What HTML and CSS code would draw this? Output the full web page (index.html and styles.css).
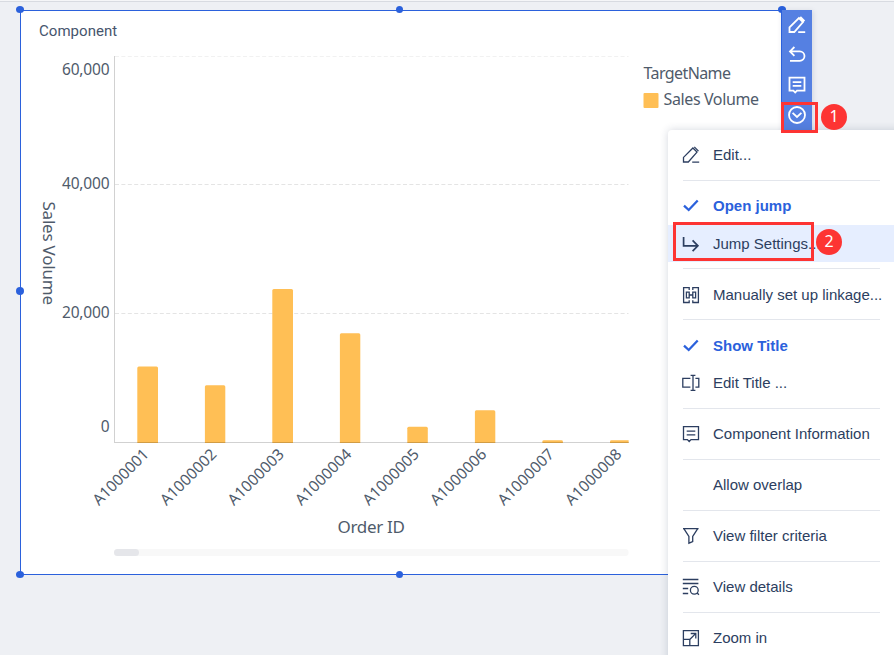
FILE: index.html
```html
<!DOCTYPE html>
<html lang="en">
<head>
<meta charset="utf-8">
<title>Dashboard component menu</title>
<link rel="stylesheet" href="styles.css">
</head>
<body>
<svg class="sprite" aria-hidden="true">
  <symbol id="i-pencil" viewBox="0 0 18 18"><path d="M1.5 16v-4.6L10.9 2l4.1 4.1L6.3 16zM12.3 .9l4.2 4.2M10.2 16.2h7"/></symbol>
  <symbol id="i-undo" viewBox="0 0 18 18"><path d="M6.4 1 2 5.4l4.4 4.4M2 5.4h9.8a4.7 4.7 0 0 1 0 9.4H2"/></symbol>
  <symbol id="i-note" viewBox="0 0 18 18"><path d="M1.5 1.6h15v13H9l-1.8 1.9-1.8-1.9H1.5zM4.7 6.2h8.6M4.7 9.8h8.6"/></symbol>
  <symbol id="i-down" viewBox="0 0 18 18"><circle cx="9" cy="9" r="8"/><path d="m4.6 6.8 4.4 4.2 4.4-4.2"/></symbol>
  <symbol id="i-check" viewBox="0 0 18 18"><path d="m2 8.6 4.7 4.4L15.7 3.5"/></symbol>
  <symbol id="i-jump" viewBox="0 0 18 18"><path d="M1.6 2v8.8h14M10.6 5.4l5.3 5.4-5.3 5.4"/></symbol>
  <symbol id="i-link" viewBox="0 0 18 18"><path d="M7.2 4V1.7H1.6v14.8h5.6v-2.3M10.8 4V1.7h5.6v14.8h-5.6v-2.3M4.4 6.2h2.8v5.6H4.4zM10.8 6.2h2.8v5.6h-2.8zM7.2 9h3.6"/></symbol>
  <symbol id="i-rename" viewBox="0 0 18 18"><path d="M8.4 4.3H.8v8.9h7.6M13.4 4.3h3.4v8.9h-3.4M11 1.3v15M8.6 1.3h4.8M8.6 16.3h4.8"/></symbol>
  <symbol id="i-filter" viewBox="0 0 18 18"><path d="M1 1.6h15.6M2 1.8l4.9 7.6v6.8l3.8-1.6V9.4l4.9-7.6"/></symbol>
  <symbol id="i-details" viewBox="0 0 18 18"><path d="M.8 1.5h15.6M.8 5.5h15.6M.8 10.5h5.4M.8 15.5h5.4M14.9 14.8l2 2"/><circle cx="12.3" cy="12.2" r="3.9"/></symbol>
  <symbol id="i-zoom" viewBox="0 0 18 18"><path d="M1.4 1.6h15v15h-15zM1.4 10.4h6.4v6.2M8 10.2l5.6-5.6M8.7 4.5h5.1v5.1"/></symbol>
</svg>
<div class="canvas">
  <section class="component">
    <h1 class="component-title">Component</h1>
    <svg class="chart" width="760" height="526" viewBox="21 48 760 526">
      <g class="grid">
        <path d="M115 56.5h513.5" class="faint"/>
        <path d="M115 184.5h513.5"/>
        <path d="M115 313.5h513.5"/>
      </g>
      <g class="bars">
        <path d="M137.3 443v-75q0-1.5 1.5-1.5h17.7q1.5 0 1.5 1.5v75z"/>
        <path d="M204.9 443v-56.3q0-1.5 1.5-1.5h17.4q1.5 0 1.5 1.5V443z"/>
        <path d="M272.3 443V290.5q0-1.5 1.5-1.5h17.7q1.5 0 1.5 1.5V443z"/>
        <path d="M339.9 443V334.7q0-1.5 1.5-1.5h17.4q1.5 0 1.5 1.5V443z"/>
        <path d="M407.3 443v-14.7q0-1.5 1.5-1.5h17.5q1.5 0 1.5 1.5V443z"/>
        <path d="M474.9 443v-31.3q0-1.5 1.5-1.5h17.4q1.5 0 1.5 1.5V443z"/>
        <path d="M542.4 443v-1.5q0-1.2 1.5-1.2h17.5q1.5 0 1.5 1.2v1.5z"/>
        <path d="M610 443v-1.5q0-1.2 1.5-1.2h17.1v2.7z"/>
      </g>
      <path class="axis" d="M114.5 56v387M115 442.5h514"/>
      <g class="labels" text-anchor="end">
        <text x="109.5" y="75" textLength="47.5">60,000</text>
        <text x="109.5" y="189" textLength="47.5">40,000</text>
        <text x="109.5" y="318" textLength="47.5">20,000</text>
        <text x="109.5" y="432">0</text>
        <text transform="translate(149.8 455.3) rotate(-45)" textLength="72">A1000001</text>
        <text transform="translate(217.5 455.3) rotate(-45)" textLength="72">A1000002</text>
        <text transform="translate(285 455.3) rotate(-45)" textLength="72">A1000003</text>
        <text transform="translate(352.5 455.3) rotate(-45)" textLength="72">A1000004</text>
        <text transform="translate(420 455.3) rotate(-45)" textLength="72">A1000005</text>
        <text transform="translate(487.5 455.3) rotate(-45)" textLength="72">A1000006</text>
        <text transform="translate(555 455.3) rotate(-45)" textLength="72">A1000007</text>
        <text transform="translate(622.5 455.3) rotate(-45)" textLength="72">A1000008</text>
      </g>
      <g class="names">
        <text transform="translate(42.5 201.5) rotate(90)" textLength="103.5">Sales Volume</text>
        <text x="337.5" y="533" textLength="67.5">Order ID</text>
        <text class="legend" x="643.5" y="79" textLength="87.5">TargetName</text>
        <text class="legend" x="663.5" y="105" textLength="95.5">Sales Volume</text>
      </g>
      <rect class="swatch" x="643.5" y="93" width="15" height="15" rx="1"/>
      <rect class="track" x="114" y="549" width="514.5" height="7" rx="3"/>
      <rect class="thumb" x="114" y="549" width="25" height="7" rx="3.5"/>
    </svg>
    <i class="handle top left"></i><i class="handle top mid"></i><i class="handle top right"></i>
    <i class="handle center left"></i><i class="handle bottom left"></i><i class="handle bottom mid"></i>
  </section>
  <nav class="toolbar">
    <svg><use href="#i-pencil"/></svg>
    <svg><use href="#i-undo"/></svg>
    <svg><use href="#i-note"/></svg>
    <svg><use href="#i-down"/></svg>
  </nav>
  <ul class="menu">
    <li class="item"><svg><use href="#i-pencil"/></svg><span>Edit...</span></li>
    <li class="rule"></li>
    <li class="item on"><svg><use href="#i-check"/></svg><span>Open jump</span></li>
    <li class="item hover"><svg class="heavy"><use href="#i-jump"/></svg><span>Jump Settings...</span></li>
    <li class="rule"></li>
    <li class="item"><svg><use href="#i-link"/></svg><span>Manually set up linkage...</span></li>
    <li class="rule"></li>
    <li class="item on"><svg><use href="#i-check"/></svg><span>Show Title</span></li>
    <li class="item"><svg><use href="#i-rename"/></svg><span>Edit Title ...</span></li>
    <li class="rule"></li>
    <li class="item"><svg><use href="#i-note"/></svg><span>Component Information</span></li>
    <li class="rule"></li>
    <li class="item"><svg></svg><span>Allow overlap</span></li>
    <li class="rule"></li>
    <li class="item"><svg><use href="#i-filter"/></svg><span>View filter criteria</span></li>
    <li class="rule"></li>
    <li class="item"><svg><use href="#i-details"/></svg><span>View details</span></li>
    <li class="rule"></li>
    <li class="item"><svg><use href="#i-zoom"/></svg><span>Zoom in</span></li>
  </ul>
  <div class="mark mark-1"></div><b class="step step-1">1</b>
  <div class="mark mark-2"></div><b class="step step-2">2</b>
</div>
</body>
</html>
```
FILE: styles.css
```css
* { box-sizing: border-box; }
body { margin: 0; background: #fff; font-family: "Liberation Sans", Arial, sans-serif; overflow: hidden; }
.sprite { position: absolute; width: 0; height: 0; }
.canvas { position: relative; height: 655px; overflow: hidden; background: #eef0f4; border-top: 1px solid #f5f6f8; box-shadow: inset 0 1px #d8dbe1; }
svg { fill: none; stroke: currentColor; }

.component { position: absolute; left: 20px; top: 9px; width: 762px; height: 565px; background: #fff; border: 1px solid #2b61dc; }
.component-title { margin: 0; height: 37px; padding: 10px 0 0 18px; font: 400 15px/20px Roboto, sans-serif; letter-spacing: .05px; color: #46556d; }
.chart { display: block; overflow: hidden; }
.chart text { fill: #4f5b6b; stroke: none; font: 15.5px "Noto Sans", sans-serif; }
.chart .names text { font-size: 17px; }
.chart .names .legend { font-size: 16px; }
.grid { stroke: #e4e4e4; stroke-dasharray: 4 2.4; }
.grid .faint { stroke: #f1f1f1; }
.axis { stroke: #000; stroke-opacity: .18; }
.bars, .swatch { fill: #ffbf55; stroke: none; }
.track { fill: #f8f8f8; stroke: none; }
.thumb { fill: #e5e6ea; stroke: none; }

.handle { position: absolute; width: 8px; height: 7px; border-radius: 50%; background: #2b61dc; }
.top { top: -5px; } .center { top: 276px; height: 8px; } .bottom { bottom: -4px; }
.left { left: -5px; } .mid { left: 375px; width: 7px; } .right { right: -5px; }

.toolbar { position: absolute; left: 781px; top: 9px; width: 31px; height: 122px; display: flex; flex-direction: column; align-items: flex-start; padding: 6px 0 0 6px; gap: 12px; background: #5580e2; border-left: 1px solid #2b61dc; color: #fff; box-shadow: 1px 1px 5px rgba(40, 60, 110, .15); }
.toolbar svg { width: 18px; height: 18px; stroke-width: 1.8; }

.menu { position: absolute; left: 668px; top: 129px; width: 236px; height: 540px; margin: 0; padding: 6.5px 0 0; list-style: none; background: #fff; border-radius: 4px; box-shadow: 0 0 9px rgba(40, 55, 90, .2); }
.item { display: flex; align-items: center; height: 37.5px; padding-left: 13.5px; gap: 13.5px; font-size: 15px; line-height: 20px; color: #2c3e60; white-space: nowrap; }
.item svg { width: 18px; height: 18px; flex: none; stroke-width: 1.3; }
.item .heavy { stroke-width: 1.7; }
.item.on { color: #2b61dc; font-weight: 700; }
.item.on svg { stroke-width: 2.3; }
.item.hover { background: linear-gradient(#e6eeff, #e6eeff) 0 0 / 100% 37px no-repeat; }
.rule { height: 1px; margin: 5.75px 0 6.75px 15px; width: 197px; background: #e3e6ec; }

.mark { position: absolute; border: 3px solid #fd3433; }
.mark-1 { left: 781px; top: 101px; width: 37px; height: 31px; }
.mark-2 { left: 673px; top: 221px; width: 141px; height: 39px; }
.step { position: absolute; width: 26px; height: 26px; border-radius: 50%; background: #fd3433; color: #fff; font: 400 16px/24px "Noto Sans", sans-serif; text-align: center; }
.step-1 { left: 821px; top: 103px; }
.step-2 { left: 816px; top: 228px; }
```
